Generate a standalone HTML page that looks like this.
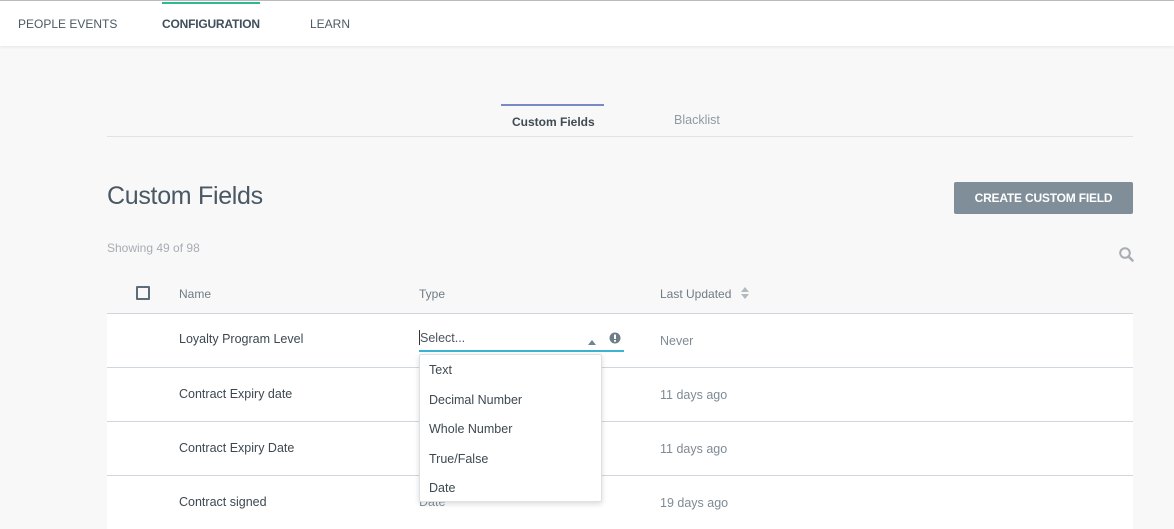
<!DOCTYPE html>
<html><head><style>
*{margin:0;padding:0;box-sizing:border-box}
body{width:1174px;height:528px;overflow:hidden;background:#f8f8f8;font-family:"Liberation Sans",sans-serif;position:relative}
.a{position:absolute;white-space:nowrap}
.hdr{position:absolute;left:0;top:0;width:1174px;height:46px;background:#fff;border-top:1px solid #bbb;box-shadow:0 1px 3px rgba(0,0,0,.08)}
.nav{font-size:12px;color:#4a5a66;top:17px}
.row{position:absolute;left:107px;width:1026px;height:54px;background:#fff;border-top:1px solid #d0d6dd}
.c{font-size:12.5px;color:#3d4850;position:absolute;top:19px}
.d{font-size:12.5px;color:#7e8a94;position:absolute;top:20px;left:553px}
.dd div{font-size:12.5px;color:#3d4850;height:29.6px;padding:8px 9px}
</style></head><body>
<div class="hdr"></div>
<div class="a" style="left:162px;top:2px;width:98px;height:2px;background:#2db896"></div>
<div class="a nav" style="left:18px">PEOPLE EVENTS</div>
<div class="a nav" style="left:162px;font-weight:bold;color:#3f4f5b;letter-spacing:-0.2px">CONFIGURATION</div>
<div class="a nav" style="left:310px">LEARN</div>

<div class="a" style="left:501px;top:104px;width:103px;height:2px;background:#7b88c6"></div>
<div class="a" style="left:512px;top:115px;font-size:12px;font-weight:bold;color:#3f4a52">Custom Fields</div>
<div class="a" style="left:674px;top:113px;font-size:12.5px;color:#8e9aa4">Blacklist</div>
<div class="a" style="left:107px;top:136px;width:1026px;height:1px;background:#e2e2e2"></div>

<div class="a" style="left:107px;top:182px;font-size:25px;color:#4a5864;letter-spacing:-0.3px">Custom Fields</div>
<div class="a" style="left:954px;top:182px;width:179px;height:32px;background:#7f8e98;border-radius:2px;color:#fff;font-size:12px;font-weight:bold;text-align:center;line-height:32px;letter-spacing:-0.2px">CREATE CUSTOM FIELD</div>
<div class="a" style="left:107px;top:241px;font-size:12px;color:#a8adb2">Showing 49 of 98</div>
<svg class="a" style="left:1118px;top:246px" width="17" height="17" viewBox="0 0 17 17"><circle cx="7" cy="7" r="4.8" fill="none" stroke="#a9adb1" stroke-width="2"/><path d="M10.5 10.5L14.5 14.5" stroke="#a9adb1" stroke-width="2.6" stroke-linecap="round"/></svg>

<div class="a" style="left:136px;top:286px;width:14px;height:14px;border:2px solid #5c6d7a;border-radius:1px"></div>
<div class="a" style="left:179px;top:287px;font-size:12px;color:#6f7b85">Name</div>
<div class="a" style="left:419px;top:287px;font-size:12px;color:#6f7b85">Type</div>
<div class="a" style="left:660px;top:287px;font-size:12px;color:#6f7b85">Last Updated</div>
<svg class="a" style="left:740px;top:286px" width="10" height="14"><path d="M1 6L5 1L9 6Z M1 8L5 13L9 8Z" fill="#b4b9be"/></svg>

<div class="row" style="top:313px"><div class="c" style="left:72px;top:18px">Loyalty Program Level</div><div class="d">Never</div></div>
<div class="row" style="top:367px"><div class="c" style="left:72px">Contract Expiry date</div><div class="d">11 days ago</div></div>
<div class="row" style="top:421px"><div class="c" style="left:72px">Contract Expiry Date</div><div class="d">11 days ago</div></div>
<div class="row" style="top:475px"><div class="c" style="left:72px">Contract signed</div><div class="c" style="left:312px;color:#8a949c">Date</div><div class="d">19 days ago</div></div>

<div class="a" style="left:419px;top:330px;width:1px;height:15px;background:#333"></div>
<div class="a" style="left:420px;top:331px;font-size:12.5px;color:#4a555e">Select...</div>
<svg class="a" style="left:588px;top:340px" width="8" height="5"><path d="M0 5L4 0L8 5Z" fill="#6f8390"/></svg>
<svg class="a" style="left:609px;top:332px" width="12" height="12"><circle cx="6" cy="6" r="5.5" fill="#6f7d88"/><rect x="5" y="2.5" width="2" height="4.5" fill="#fff"/><rect x="5" y="8" width="2" height="1.7" fill="#fff"/></svg>
<div class="a" style="left:419px;top:350px;width:205px;height:2px;background:#3ab4d0"></div>
<div class="a dd" style="left:419px;top:354px;width:183px;height:148px;background:#fff;border:1px solid #dde1e4;border-radius:2px;box-shadow:0 2px 6px rgba(0,0,0,.15)">
<div>Text</div><div>Decimal Number</div><div>Whole Number</div><div>True/False</div><div>Date</div>
</div>
</body></html>
